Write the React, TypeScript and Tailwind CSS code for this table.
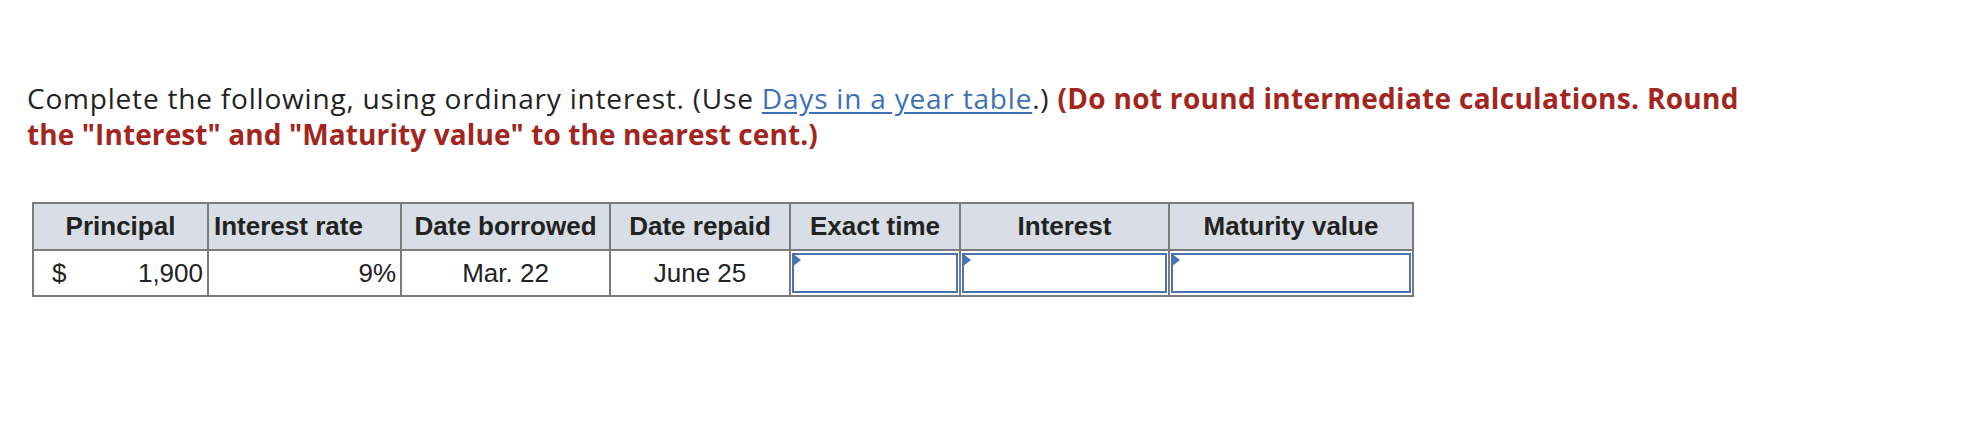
const HEADERS = [
  { label: 'Principal', w: 'w-[175px]' },
  { label: 'Interest rate', w: 'w-[193px]', align: 'text-left pl-[5px]' },
  { label: 'Date borrowed', w: 'w-[209px]' },
  { label: 'Date repaid', w: 'w-[180px]' },
  { label: 'Exact time', w: 'w-[170px]' },
  { label: 'Interest', w: 'w-[209px]' },
  { label: 'Maturity value', w: 'w-[244px]' },
];

function AnswerCell() {
  return (
    <td className="border-2 border-[#7b7b7b] p-[1px]">
      <div className="relative h-[40px] border-2 border-[#4a72b4] bg-white">
        <span className="absolute -left-[2px] -top-[2px] h-0 w-0 border-y-[7px] border-l-[9px] border-y-transparent border-l-[#4a72b4]" />
      </div>
    </td>
  );
}

export default function App() {
  return (
    <div className="min-h-[434px] w-[1970px] bg-white pt-[80px]">
      <p className="pl-[27px] font-['Open_Sans','Noto_Sans',sans-serif] text-[28px] leading-[36px] tracking-[0.8px] text-[#222]">
        Complete the following, using ordinary interest. (Use{' '}
        <a className="text-[#3d6fb6] underline underline-offset-[3px]" href="#">Days in a year table</a>.){' '}
        <b className="font-bold tracking-[0.3px] text-[#a3261e]">
          (Do not round intermediate calculations. Round
          <br />
          <span className="tracking-[0.1px]">the "Interest" and "Maturity value" to the nearest cent.)</span>
        </b>
      </p>

      <table className="ml-[32px] mt-[50px] table-fixed border-collapse border-2 border-[#7b7b7b] font-['Liberation_Sans',Arial,sans-serif] text-[#222]">
        <thead>
          <tr className="h-[47px] bg-[#d9dde6]">
            {HEADERS.map((h) => (
              <th key={h.label} className={`${h.w} border-2 border-[#7b7b7b] px-[5px] text-[26px] font-bold ${h.align ?? 'text-center'}`}>
                {h.label}
              </th>
            ))}
          </tr>
        </thead>
        <tbody>
          <tr className="h-[46px] text-[26px]">
            <td className="border-2 border-[#7b7b7b] px-[4px]">
              <div className="flex justify-between pl-[14px]">
                <span>$</span>
                <span>1,900</span>
              </div>
            </td>
            <td className="border-2 border-[#7b7b7b] px-[4px] text-right">9%</td>
            <td className="border-2 border-[#7b7b7b] text-center">Mar. 22</td>
            <td className="border-2 border-[#7b7b7b] text-center">June 25</td>
            <AnswerCell />
            <AnswerCell />
            <AnswerCell />
          </tr>
        </tbody>
      </table>
    </div>
  );
}
